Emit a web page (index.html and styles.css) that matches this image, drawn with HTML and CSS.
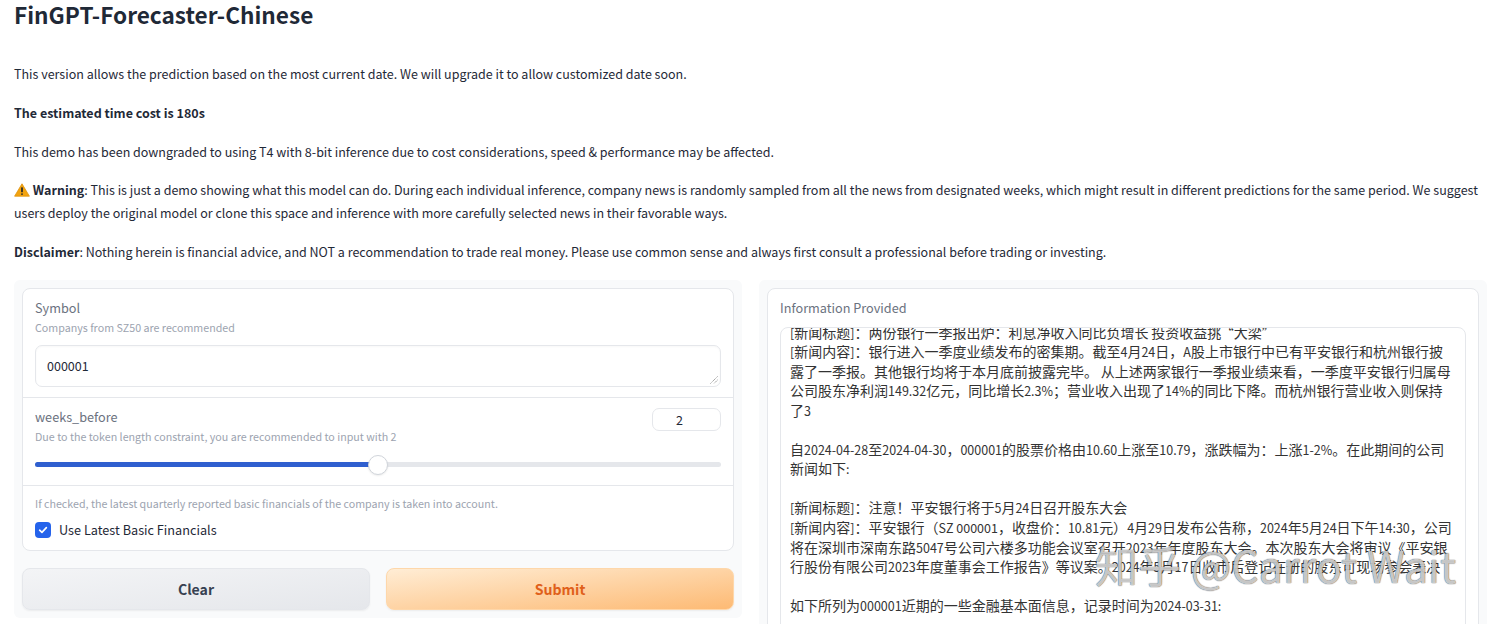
FILE: index.html
```html
<!DOCTYPE html>
<html lang="en">
<head>
<meta charset="utf-8">
<title>FinGPT-Forecaster-Chinese</title>
<link rel="stylesheet" href="styles.css">
</head>
<body>
<div class="page">
  <h1 class="title">FinGPT-Forecaster-Chinese</h1>
  <div class="intro">
    <p>This version allows the prediction based on the most current date. We will upgrade it to allow customized date soon.</p>
    <p><strong>The estimated time cost is 180s</strong></p>
    <p>This demo has been downgraded to using T4 with 8-bit inference due to cost considerations, speed &amp; performance may be affected.</p>
    <p><svg class="warn" viewBox="0 0 16 14" width="16" height="14" aria-hidden="true"><path d="M8 0.8 L15.4 13.2 H0.6 Z" fill="#f2a30f" stroke="#e0920a" stroke-width="0.8" stroke-linejoin="round"/><rect x="7.1" y="4.3" width="1.8" height="5" rx="0.6" fill="#2b2b2b"/><circle cx="8" cy="11.1" r="0.95" fill="#2b2b2b"/></svg> <strong>Warning</strong>: This is just a demo showing what this model can do. During each individual inference, company news is randomly sampled from all the news from designated weeks, which might result in different predictions for the same period. We suggest<br>users deploy the original model or clone this space and inference with more carefully selected news in their favorable ways.</p>
    <p><strong>Disclaimer</strong>: Nothing herein is financial advice, and NOT a recommendation to trade real money. Please use common sense and always first consult a professional before trading or investing.</p>
  </div>

  <div class="row">
    <div class="panel panel-left">
      <div class="card">
        <div class="block">
          <div class="label">Symbol</div>
          <div class="info">Companys from SZ50 are recommended</div>
          <div class="textbox">000001
            <svg class="resize" viewBox="0 0 8 8" width="8" height="8" aria-hidden="true"><path d="M7.5 0.5 L0.5 7.5 M7.5 4 L4 7.5" stroke="#777" stroke-width="0.9" stroke-dasharray="1 0.8"/></svg>
          </div>
        </div>
        <div class="block">
          <div class="slider-head">
            <div>
              <div class="label">weeks_before</div>
              <div class="info">Due to the token length constraint, you are recommended to input with 2</div>
            </div>
            <div class="num">2</div>
          </div>
          <div class="slider">
            <div class="track"><div class="fill" style="width:50%"></div></div>
            <div class="thumb" style="left:50%"></div>
          </div>
        </div>
        <div class="block block-last">
          <div class="info">If checked, the latest quarterly reported basic financials of the company is taken into account.</div>
          <div class="check-row">
            <span class="checkbox"><svg viewBox="0 0 16 16" width="12" height="12" aria-hidden="true"><path d="M3.5 8.3 L6.6 11.2 L12.5 4.9" fill="none" stroke="#fff" stroke-width="2.2" stroke-linecap="round" stroke-linejoin="round"/></svg></span>
            <span class="check-label">Use Latest Basic Financials</span>
          </div>
        </div>
      </div>
      <div class="buttons">
        <button class="btn btn-secondary">Clear</button>
        <button class="btn btn-primary">Submit</button>
      </div>
    </div>

    <div class="panel panel-right">
      <div class="card card-right">
        <div class="block">
          <div class="label">Information Provided</div>
          <div class="output">
            <div class="output-text">
              <div class="ln"><span class="l">[</span>新闻标题<span class="l">]</span>：两份银行一季报出炉：利息净收入同比负增长<span class="l"> </span>投资收益挑<span class="l">“</span>大梁<span class="l">”</span></div>
              <div class="ln"><span class="l">[</span>新闻内容<span class="l">]</span>：银行进入一季度业绩发布的密集期。截至<span class="l">4</span>月<span class="l">24</span>日，<span class="l">A</span>股上市银行中已有平安银行和杭州银行披</div>
              <div class="ln">露了一季报。其他银行均将于本月底前披露完毕。<span class="l"> </span>从上述两家银行一季报业绩来看，一季度平安银行归属母</div>
              <div class="ln">公司股东净利润<span class="l">149.32</span>亿元，同比增长<span class="l">2.3%</span>；营业收入出现了<span class="l">14%</span>的同比下降。而杭州银行营业收入则保持</div>
              <div class="ln">了<span class="l">3</span></div>
              <div class="ln"> </div>
              <div class="ln">自<span class="l">2024-04-28</span>至<span class="l">2024-04-30</span>，<span class="l">000001</span>的股票价格由<span class="l">10.60</span>上涨至<span class="l">10.79</span>，涨跌幅为：上涨<span class="l">1-2%</span>。在此期间的公司</div>
              <div class="ln">新闻如下<span class="l">:</span></div>
              <div class="ln"> </div>
              <div class="ln"><span class="l">[</span>新闻标题<span class="l">]</span>：注意！平安银行将于<span class="l">5</span>月<span class="l">24</span>日召开股东大会</div>
              <div class="ln"><span class="l">[</span>新闻内容<span class="l">]</span>：平安银行（<span class="l">SZ 000001</span>，收盘价：<span class="l">10.81</span>元）<span class="l">4</span>月<span class="l">29</span>日发布公告称，<span class="l">2024</span>年<span class="l">5</span>月<span class="l">24</span>日下午<span class="l">14:30</span>，公司</div>
              <div class="ln">将在深圳市深南东路<span class="l">5047</span>号公司六楼多功能会议室召开<span class="l">2023</span>年年度股东大会。本次股东大会将审议《平安银</div>
              <div class="ln">行股份有限公司<span class="l">2023</span>年度董事会工作报告》等议案。<span class="l">2024</span>年<span class="l">5</span>月<span class="l">17</span>日收市后登记在册的股东可现场参会表决</div>
              <div class="ln"> </div>
              <div class="ln">如下所列为<span class="l">000001</span>近期的一些金融基本面信息，记录时间为<span class="l">2024-03-31:</span></div>
            </div>
          </div>
        </div>
      </div>
      <div class="watermark">知乎 @Carrot Wait</div>
    </div>
  </div>
</div>
</body>
</html>
```

FILE: styles.css
```css
html, body {
  margin: 0;
  padding: 0;
  background: #ffffff;
  overflow: hidden;
}

body {
  font-family: "Noto Sans CJK SC", Lato, "Noto Sans", sans-serif;
  color: #1f2937;
}

.page {
  padding: 0 10px 0 14px;
}

.title {
  margin: 0;
  font-size: 22.6px;
  line-height: 30px;
  font-weight: 700;
  color: #1f2937;
}

.intro {
  margin-top: 33px;
}

.intro p {
  margin: 0 0 16px;
  font-size: 12.5px;
  line-height: 22.75px;
  color: #1f2937;
  white-space: nowrap;
}

.intro strong {
  font-weight: 700;
}

.warn {
  vertical-align: -2px;
}

.row {
  display: flex;
  gap: 17px;
  align-items: flex-start;
}

.panel {
  flex: 1 1 0;
  background: #f9fafb;
  padding: 8px;
  border-radius: 6px;
  min-width: 0;
}

.panel-right {
  position: relative;
  height: 400px;
}

.card {
  background: #ffffff;
  border: 1px solid #e5e7eb;
  border-radius: 8px;
}

.block {
  padding: 10px 12px;
  border-bottom: 1px solid #e5e7eb;
}

.block-last {
  border-bottom: none;
}

.label {
  font-size: 12.7px;
  line-height: 18px;
  color: #6b7280;
}

.info {
  margin-top: 3px;
  font-size: 10.7px;
  line-height: 16px;
  color: #9ca3af;
}

.block-last .info {
  margin-top: 0;
}

.textbox {
  position: relative;
  margin-top: 9px;
  height: 42px;
  box-sizing: border-box;
  border: 1px solid #e5e7eb;
  border-radius: 7px;
  padding: 0 11px;
  display: flex;
  align-items: center;
  font-size: 12.5px;
  color: #1f2937;
  box-shadow: inset 0 1px 2px rgba(0,0,0,0.03);
}

.resize {
  position: absolute;
  right: 2px;
  bottom: 2px;
}

.slider-head {
  display: flex;
  justify-content: space-between;
  align-items: flex-start;
}

.num {
  width: 69px;
  height: 23px;
  box-sizing: border-box;
  border: 1px solid #e5e7eb;
  border-radius: 7px;
  font-size: 12.5px;
  line-height: 21px;
  text-align: center;
  padding-right: 14px;
  color: #1f2937;
}

.slider {
  position: relative;
  margin-top: 10px;
  height: 20px;
  display: flex;
  align-items: center;
}

.track {
  width: 100%;
  height: 5px;
  border-radius: 3px;
  background: #e5e7eb;
  overflow: hidden;
}

.fill {
  height: 100%;
  background: #2f5fcf;
}

.thumb {
  position: absolute;
  top: 0;
  width: 20px;
  height: 20px;
  margin-left: -10px;
  box-sizing: border-box;
  border-radius: 50%;
  background: #ffffff;
  border: 1px solid #d1d5db;
  box-shadow: 0 1px 2px rgba(0,0,0,0.08);
}

.check-row {
  margin-top: 8px;
  height: 20px;
  display: flex;
  align-items: center;
  gap: 8px;
}

.checkbox {
  width: 16px;
  height: 16px;
  border-radius: 4px;
  background: #2563eb;
  display: flex;
  align-items: center;
  justify-content: center;
}

.check-label {
  font-size: 12.7px;
  color: #1f2937;
}

.buttons {
  display: flex;
  gap: 16px;
  margin-top: 17px;
}

.btn {
  flex: 1 1 0;
  height: 42px;
  border-radius: 8px;
  font-family: inherit;
  font-size: 14.1px;
  font-weight: 700;
  cursor: pointer;
  box-shadow: 0 1px 2px rgba(0,0,0,0.06);
}

.btn-secondary {
  background: linear-gradient(to bottom right, #f3f4f6, #e5e7eb);
  border: 1px solid #e5e7eb;
  color: #374151;
}

.btn-primary {
  background: linear-gradient(to bottom right, #ffedd5, #fdba74);
  border: 1px solid #fed7aa;
  color: #e0601a;
}

.card-right {
  height: 600px;
}

.output {
  margin-top: 10px;
  height: 560px;
  border: 1px solid #e5e7eb;
  border-radius: 8px;
  overflow: hidden;
  padding: 0 9px;
}

.output-text {
  margin-top: -5px;
  font-family: "Noto Sans CJK SC", "Noto Sans", sans-serif;
  font-size: 14px;
  line-height: 19.55px;
  color: #333333;
}

.ln {
  height: 19.55px;
  white-space: pre;
}

.l {
  font-size: 12.5px;
}

.watermark {
  position: absolute;
  left: 336px;
  top: 259px;
  font-family: "Noto Sans CJK SC", "Noto Sans", sans-serif;
  font-size: 43px;
  line-height: 50px;
  color: rgba(255,255,255,0.72);
  text-shadow: 0 0 1px rgba(0,0,0,0.55), 0 0 1px rgba(0,0,0,0.55);
  white-space: nowrap;
  pointer-events: none;
}
```
